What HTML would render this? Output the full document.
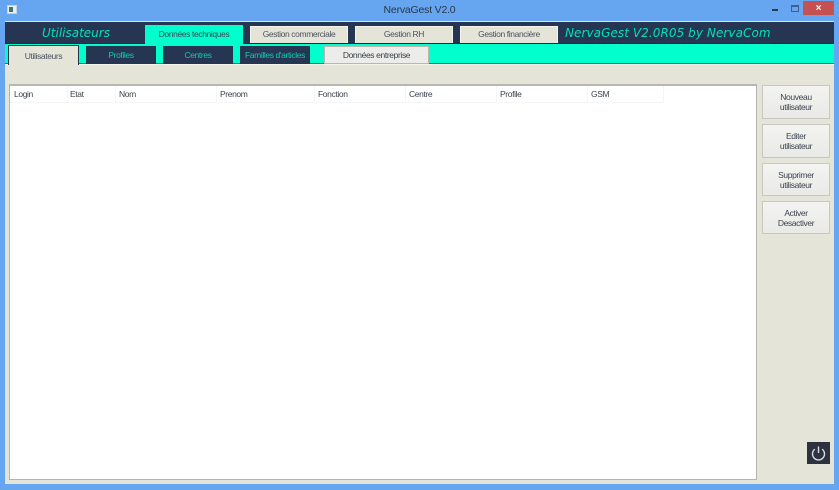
<!DOCTYPE html>
<html><head><meta charset="utf-8"><style>
html,body{margin:0;padding:0}
body{width:839px;height:490px;position:relative;overflow:hidden;background:#66a5ef;font-family:"Liberation Sans",sans-serif;font-size:8.5px;letter-spacing:-.38px;color:#3c4450}
div{position:absolute;box-sizing:border-box}
.c{text-align:center;white-space:nowrap}
.top{background:#e4e4d8;border:1px solid #f4f4ec;border-bottom:0;top:26px;width:98px;height:17px;line-height:15px;color:#4a5260}
.sub{background:#263552;color:#12c9ab;top:46px;width:70px;height:18px;line-height:19px;font-size:8.5px}
.t{font-family:"DejaVu Sans",sans-serif;font-style:italic;color:#00e0b8;white-space:nowrap;letter-spacing:0}
.h{top:86px;height:16px;line-height:17px;white-space:nowrap}
.d{top:86px;width:1px;height:16px;background:#f5f5f5}
.b{left:762px;width:68px;background:linear-gradient(#f3f3f1,#e9e9e6);border:1px solid #c8c8c0;text-align:center;line-height:10px;color:#3c4450;display:flex;align-items:center;justify-content:center}
</style></head><body>
<div style="left:7px;top:5px;width:10px;height:9px;background:#e8eef0;border:1px solid #c6d3de"><div style="left:1px;top:1px;width:4px;height:5px;background:#3d7a68"></div></div>
<div class="c" style="left:0;top:3px;width:839px;font-size:10.5px;letter-spacing:-.2px;line-height:15px;color:#28384c">NervaGest V2.0</div>
<div style="left:772px;top:9px;width:6px;height:2px;background:#2a3a50"></div>
<div style="left:791px;top:5px;width:8px;height:7px;border:1px solid #3f5f8c;border-top-width:2px"></div>
<div class="c" style="left:803px;top:1px;width:31px;height:14px;background:#c75050;color:#fff;font-size:10px;letter-spacing:0;line-height:15px;font-weight:bold">×</div>

<div style="left:5px;top:21px;width:829px;height:463px;background:#e4e4d8"></div>
<div style="left:5px;top:22px;width:829px;height:21px;background:#263552"></div>
<div style="left:5px;top:43px;width:829px;height:21px;background:#00ffcc;border-top:1px solid #1c2c44;border-bottom:1px solid #4a6a64"></div>
<div style="left:5px;top:64px;width:829px;height:1px;background:#f4f4ec"></div>

<div class="t" style="left:42px;top:24px;font-size:12px;line-height:19px">Utilisateurs</div>
<div class="c" style="left:145px;top:25px;width:98px;height:21px;background:#00ffcc;line-height:18px;color:#3c4a54">Données techniques</div>
<div class="c top" style="left:250px">Gestion commerciale</div>
<div class="c top" style="left:355px">Gestion RH</div>
<div class="c top" style="left:460px">Gestion financière</div>
<div class="t" style="left:565px;top:24px;font-size:12px;line-height:19px;letter-spacing:.07px">NervaGest V2.0R05 by NervaCom</div>

<div class="c" style="left:8px;top:45px;width:71px;height:20px;background:#e4e4d8;border-top:1px solid #24344c;border-left:1px solid #24344c;border-right:1px solid #24344c;line-height:20px;color:#4a5260">Utilisateurs</div>
<div class="c sub" style="left:86px">Profiles</div>
<div class="c sub" style="left:163px">Centres</div>
<div class="c sub" style="left:240px">Familles d'articles</div>
<div class="c" style="left:324px;top:46px;width:105px;height:18px;background:#ececea;border:1px solid #b8b8b0;line-height:17px;color:#3a4250">Données entreprise</div>

<div style="left:9px;top:84px;width:748px;height:396px;background:#fff;border:1px solid #b4b4ac;border-top:2px solid #b8b8b0"></div>
<div class="h" style="left:14px">Login</div>
<div class="h" style="left:70px">Etat</div>
<div class="h" style="left:119px">Nom</div>
<div class="h" style="left:220px">Prenom</div>
<div class="h" style="left:318px">Fonction</div>
<div class="h" style="left:409px">Centre</div>
<div class="h" style="left:500px">Profile</div>
<div class="h" style="left:591px">GSM</div>
<div class="d" style="left:67px"></div><div class="d" style="left:115px"></div><div class="d" style="left:216px"></div><div class="d" style="left:314px"></div><div class="d" style="left:405px"></div><div class="d" style="left:496px"></div><div class="d" style="left:587px"></div><div class="d" style="left:663px"></div>
<div style="left:10px;top:102px;width:654px;height:1px;background:#f5f5f5"></div>

<div class="b" style="top:85px;height:34px">Nouveau<br>utilisateur</div>
<div class="b" style="top:124px;height:34px">Editer<br>utilisateur</div>
<div class="b" style="top:163px;height:33px">Supprimer<br>utilisateur</div>
<div class="b" style="top:201px;height:33px">Activer<br>Desactiver</div>

<div style="left:807px;top:442px;width:23px;height:22px;background:#2c3240">
<svg width="23" height="22" viewBox="0 0 23 22" style="display:block"><path d="M7.8 7.2A6 6 0 1 0 15.2 7.2M11.5 4.5V11" fill="none" stroke="#d8dcdc" stroke-width="1.4"/></svg>
</div>
</body></html>
